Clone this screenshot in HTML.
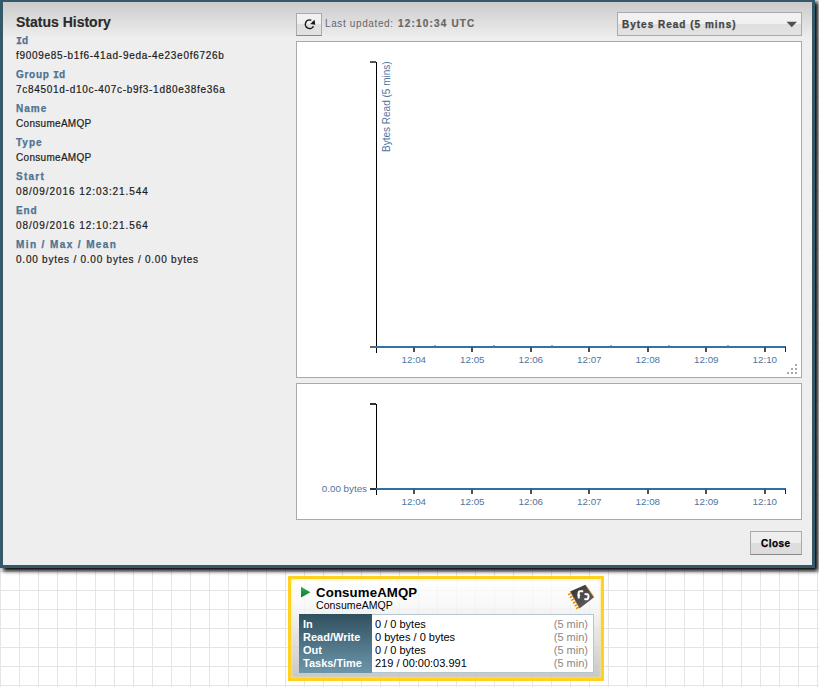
<!DOCTYPE html>
<html><head><meta charset="utf-8">
<style>
*{margin:0;padding:0;box-sizing:border-box}
html,body{width:819px;height:687px;overflow:hidden;background:#fff;font-family:"Liberation Sans",sans-serif}
.abs{position:absolute}
#grid{position:absolute;left:0;top:0}
#dlg{position:absolute;left:0;top:-1px;width:815px;height:569px;background:#355969;box-shadow:3px 3px 4px #000}
#dlgin{position:absolute;left:3px;top:3px;width:809px;height:563px;background:linear-gradient(#cbcbcb 0px,#eeeeee 36px,#eeeeee 100%)}
.t{position:absolute;white-space:nowrap;line-height:1}
.lbl{color:#4f7292;font-weight:bold;font-size:10px;-webkit-text-stroke:0.25px #4f7292}
.val{color:#1c1c1c;font-size:10px;-webkit-text-stroke:0.2px #1c1c1c}
.btn{position:absolute;border:1px solid #aaa;border-bottom-color:#888;background:linear-gradient(#f2f2f2 0,#f0f0f0 50%,#dfdfdf 50%,#e2e2e2 100%)}
.panel{position:absolute;background:#fff;border:1px solid #a9a9a9}
.ax{fill:#50759d;font-size:9.8px;font-family:"Liberation Sans",sans-serif}
</style></head><body>
<svg id="grid" width="819" height="687"><g fill="#e4e4e4" shape-rendering="crispEdges"><rect x="0" y="0" width="1" height="687"/><rect x="19" y="0" width="1" height="687"/><rect x="38" y="0" width="1" height="687"/><rect x="57" y="0" width="1" height="687"/><rect x="76" y="0" width="1" height="687"/><rect x="95" y="0" width="1" height="687"/><rect x="114" y="0" width="1" height="687"/><rect x="133" y="0" width="1" height="687"/><rect x="152" y="0" width="1" height="687"/><rect x="171" y="0" width="1" height="687"/><rect x="190" y="0" width="1" height="687"/><rect x="209" y="0" width="1" height="687"/><rect x="228" y="0" width="1" height="687"/><rect x="247" y="0" width="1" height="687"/><rect x="266" y="0" width="1" height="687"/><rect x="285" y="0" width="1" height="687"/><rect x="304" y="0" width="1" height="687"/><rect x="323" y="0" width="1" height="687"/><rect x="342" y="0" width="1" height="687"/><rect x="361" y="0" width="1" height="687"/><rect x="380" y="0" width="1" height="687"/><rect x="399" y="0" width="1" height="687"/><rect x="418" y="0" width="1" height="687"/><rect x="437" y="0" width="1" height="687"/><rect x="456" y="0" width="1" height="687"/><rect x="475" y="0" width="1" height="687"/><rect x="494" y="0" width="1" height="687"/><rect x="513" y="0" width="1" height="687"/><rect x="532" y="0" width="1" height="687"/><rect x="551" y="0" width="1" height="687"/><rect x="570" y="0" width="1" height="687"/><rect x="589" y="0" width="1" height="687"/><rect x="608" y="0" width="1" height="687"/><rect x="627" y="0" width="1" height="687"/><rect x="646" y="0" width="1" height="687"/><rect x="665" y="0" width="1" height="687"/><rect x="684" y="0" width="1" height="687"/><rect x="703" y="0" width="1" height="687"/><rect x="722" y="0" width="1" height="687"/><rect x="741" y="0" width="1" height="687"/><rect x="760" y="0" width="1" height="687"/><rect x="779" y="0" width="1" height="687"/><rect x="798" y="0" width="1" height="687"/><rect x="817" y="0" width="1" height="687"/><rect x="0" y="1" width="819" height="1"/><rect x="0" y="20" width="819" height="1"/><rect x="0" y="39" width="819" height="1"/><rect x="0" y="58" width="819" height="1"/><rect x="0" y="77" width="819" height="1"/><rect x="0" y="96" width="819" height="1"/><rect x="0" y="115" width="819" height="1"/><rect x="0" y="134" width="819" height="1"/><rect x="0" y="153" width="819" height="1"/><rect x="0" y="172" width="819" height="1"/><rect x="0" y="191" width="819" height="1"/><rect x="0" y="210" width="819" height="1"/><rect x="0" y="229" width="819" height="1"/><rect x="0" y="248" width="819" height="1"/><rect x="0" y="267" width="819" height="1"/><rect x="0" y="286" width="819" height="1"/><rect x="0" y="305" width="819" height="1"/><rect x="0" y="324" width="819" height="1"/><rect x="0" y="343" width="819" height="1"/><rect x="0" y="362" width="819" height="1"/><rect x="0" y="381" width="819" height="1"/><rect x="0" y="400" width="819" height="1"/><rect x="0" y="419" width="819" height="1"/><rect x="0" y="438" width="819" height="1"/><rect x="0" y="457" width="819" height="1"/><rect x="0" y="476" width="819" height="1"/><rect x="0" y="495" width="819" height="1"/><rect x="0" y="514" width="819" height="1"/><rect x="0" y="533" width="819" height="1"/><rect x="0" y="552" width="819" height="1"/><rect x="0" y="571" width="819" height="1"/><rect x="0" y="590" width="819" height="1"/><rect x="0" y="609" width="819" height="1"/><rect x="0" y="628" width="819" height="1"/><rect x="0" y="647" width="819" height="1"/><rect x="0" y="666" width="819" height="1"/><rect x="0" y="685" width="819" height="1"/></g></svg>

<div id="dlg"><div id="dlgin"></div></div>

<!-- left info -->
<div class="t" style="left:16px;top:15px;font-size:14px;font-weight:bold;color:#2a2a2a;-webkit-text-stroke:0.15px #2a2a2a">Status History</div>
<div class="t lbl" style="left:16px;top:36px"><span style="font-family:'Liberation Mono',monospace">I</span>d</div>
<div class="t val" style="left:16px;top:51px;letter-spacing:0.71px">f9009e85-b1f6-41ad-9eda-4e23e0f6726b</div>
<div class="t lbl" style="left:16px;top:70px;letter-spacing:0.7px">Group <span style="font-family:'Liberation Mono',monospace;letter-spacing:0">I</span>d</div>
<div class="t val" style="left:16px;top:85px;letter-spacing:0.71px">7c84501d-d10c-407c-b9f3-1d80e38fe36a</div>
<div class="t lbl" style="left:16px;top:104px;letter-spacing:1px">Name</div>
<div class="t val" style="left:16px;top:119px;letter-spacing:0.3px">ConsumeAMQP</div>
<div class="t lbl" style="left:16px;top:138px;letter-spacing:1px">Type</div>
<div class="t val" style="left:16px;top:153px;letter-spacing:0.3px">ConsumeAMQP</div>
<div class="t lbl" style="left:16px;top:172px;letter-spacing:1.25px">Start</div>
<div class="t val" style="left:16px;top:187px;letter-spacing:0.94px">08/09/2016 12:03:21.544</div>
<div class="t lbl" style="left:16px;top:206px;letter-spacing:0.85px">End</div>
<div class="t val" style="left:16px;top:221px;letter-spacing:0.94px">08/09/2016 12:10:21.564</div>
<div class="t lbl" style="left:16px;top:240px;letter-spacing:1.4px">Min / Max / Mean</div>
<div class="t val" style="left:16px;top:255px;letter-spacing:0.77px">0.00 bytes / 0.00 bytes / 0.00 bytes</div>

<!-- toolbar -->
<div class="btn" style="left:296px;top:13px;width:26px;height:23px"></div>
<svg class="abs" style="left:296px;top:13px" width="26" height="23">
 <path d="M17.5 13.2 A4.3 4.3 0 1 1 15.3 7.3" fill="none" stroke="#151515" stroke-width="1.45"/>
 <path d="M14.3 11.1 L19.3 11.7 L18.5 6.8 Z" fill="#151515"/>
</svg>
<div class="t" style="left:325px;top:19px;font-size:10px;color:#666;letter-spacing:0.62px">Last updated:</div>
<div class="t" style="left:398px;top:19px;font-size:10px;color:#666;font-weight:bold;letter-spacing:1.18px;-webkit-text-stroke:0.2px #666">12:10:34 UTC</div>

<div class="btn" style="left:617px;top:12px;width:185px;height:24px;border-color:#aaa"></div>
<div class="t" style="left:622px;top:20px;font-size:10px;font-weight:bold;color:#444;letter-spacing:1px;-webkit-text-stroke:0.25px #444">Bytes Read (5 mins)</div>
<svg class="abs" style="left:786px;top:20px" width="12" height="9"><path d="M0.5 1.8 L11 1.8 L5.75 7.2 Z" fill="#505050"/></svg>

<!-- panel 1 -->
<div class="panel" style="left:296px;top:41px;width:506px;height:337px"></div>
<div class="panel" style="left:296px;top:383px;width:506px;height:137px"></div>
<svg class="abs" style="left:0;top:0" width="819" height="687">
 <g shape-rendering="crispEdges">
  <rect x="376" y="62" width="1" height="291" fill="#000"/>
  <rect x="370" y="61" width="6" height="2" fill="#555"/>
  <rect x="370" y="346" width="6" height="2" fill="#666"/>
  <rect x="376" y="347" width="410" height="1" fill="#666"/>
  <rect x="376" y="346" width="410" height="1" fill="#3373ab"/>
  <rect x="413" y="347" width="2" height="5" fill="#505050"/><rect x="471" y="347" width="2" height="5" fill="#505050"/><rect x="530" y="347" width="2" height="5" fill="#505050"/><rect x="588" y="347" width="2" height="5" fill="#505050"/><rect x="647" y="347" width="2" height="5" fill="#505050"/><rect x="705" y="347" width="2" height="5" fill="#505050"/><rect x="764" y="347" width="2" height="5" fill="#505050"/><rect x="785" y="347" width="1" height="5" fill="#222"/>
  <rect x="434" y="345" width="2" height="1" fill="#8fb3d6"/><rect x="493" y="345" width="2" height="1" fill="#8fb3d6"/><rect x="551" y="345" width="2" height="1" fill="#8fb3d6"/><rect x="610" y="345" width="2" height="1" fill="#8fb3d6"/><rect x="668" y="345" width="2" height="1" fill="#8fb3d6"/><rect x="727" y="345" width="2" height="1" fill="#8fb3d6"/>
  <rect x="795" y="364" width="2" height="2" fill="#aaa"/>
  <rect x="791" y="368" width="2" height="2" fill="#aaa"/>
  <rect x="795" y="368" width="2" height="2" fill="#aaa"/>
  <rect x="787" y="372" width="2" height="2" fill="#aaa"/>
  <rect x="791" y="372" width="2" height="2" fill="#aaa"/>
  <rect x="795" y="372" width="2" height="2" fill="#aaa"/>

  <rect x="376" y="404" width="1" height="91" fill="#000"/>
  <rect x="370" y="403" width="6" height="2" fill="#333"/>
  <rect x="370" y="488" width="6" height="2" fill="#333"/>
  <rect x="376" y="488" width="410" height="2" fill="#2f6fa3"/>
  <rect x="413" y="489" width="2" height="5" fill="#505050"/><rect x="471" y="489" width="2" height="5" fill="#505050"/><rect x="530" y="489" width="2" height="5" fill="#505050"/><rect x="588" y="489" width="2" height="5" fill="#505050"/><rect x="647" y="489" width="2" height="5" fill="#505050"/><rect x="705" y="489" width="2" height="5" fill="#505050"/><rect x="764" y="489" width="2" height="5" fill="#505050"/><rect x="785" y="489" width="1" height="5" fill="#222"/>
 </g>
 <g class="ax">
  <text transform="translate(390,152) rotate(-90)" style="font-size:10px">Bytes Read (5 mins)</text>
  <text x="413.8" y="363" text-anchor="middle">12:04</text><text x="472.3" y="363" text-anchor="middle">12:05</text><text x="530.8" y="363" text-anchor="middle">12:06</text><text x="589.3" y="363" text-anchor="middle">12:07</text><text x="647.8" y="363" text-anchor="middle">12:08</text><text x="706.3" y="363" text-anchor="middle">12:09</text><text x="764.8" y="363" text-anchor="middle">12:10</text>
  <text x="413.8" y="505" text-anchor="middle">12:04</text><text x="472.3" y="505" text-anchor="middle">12:05</text><text x="530.8" y="505" text-anchor="middle">12:06</text><text x="589.3" y="505" text-anchor="middle">12:07</text><text x="647.8" y="505" text-anchor="middle">12:08</text><text x="706.3" y="505" text-anchor="middle">12:09</text><text x="764.8" y="505" text-anchor="middle">12:10</text>
  <text x="367" y="491.5" text-anchor="end">0.00 bytes</text>
 </g>
</svg>

<!-- close -->
<div class="btn" style="left:750px;top:531px;width:52px;height:24px;background:linear-gradient(#eeeeee 0,#eeeeee 50%,#dddddd 50%,#dddddd 100%)"></div>
<div class="t" style="left:761px;top:539px;font-size:10px;font-weight:bold;color:#000;letter-spacing:0.45px;-webkit-text-stroke:0.25px #000">Close</div>

<!-- processor -->
<div class="abs" style="left:288px;top:576px;width:316px;height:105px;border:3px solid #ffd21f;background:linear-gradient(rgba(255,255,255,0.82) 0%,rgba(248,248,248,0.8) 25%,rgba(190,190,190,0.85) 100%);box-shadow:inset 0 0 2px 1px rgba(255,230,140,0.7)"></div>
<svg class="abs" style="left:300px;top:586px" width="12" height="13"><defs><linearGradient id="pg" x1="0" y1="0" x2="0" y2="1"><stop offset="0" stop-color="#2bb24f"/><stop offset="1" stop-color="#0d7a33"/></linearGradient></defs><path d="M1 0.7 L10.4 6.2 L1 11.5 Z" fill="url(#pg)"/></svg>
<div class="t" style="left:316px;top:586px;font-size:13.2px;font-weight:bold;color:#000;letter-spacing:0.15px">ConsumeAMQP</div>
<div class="t" style="left:316px;top:600px;font-size:10.5px;color:#000;letter-spacing:0.1px">ConsumeAMQP</div>
<svg class="abs" style="left:564px;top:582px" width="34" height="30">
 <defs><linearGradient id="cg" x1="0" y1="0" x2="1" y2="1"><stop offset="0" stop-color="#2e2e2e"/><stop offset="1" stop-color="#6a6a6a"/></linearGradient></defs>
 <polygon points="21.4,2.8 30.1,15.3 15.5,26.6 6.1,9.4" fill="url(#cg)"/>
 <line x1="22.2" y1="3.6" x2="29.6" y2="14.4" stroke="#f0a52a" stroke-width="0.9"/>
 <g stroke="#e8900c" stroke-width="1.5" stroke-linecap="round">
  <line x1="6.8" y1="11.2" x2="4.6" y2="12.6"/>
  <line x1="8.4" y1="14" x2="6.2" y2="15.4"/>
  <line x1="10" y1="16.8" x2="7.8" y2="18.2"/>
  <line x1="11.6" y1="19.6" x2="9.4" y2="21"/>
  <line x1="13.2" y1="22.4" x2="11" y2="23.8"/>
  <line x1="14.8" y1="25" x2="12.6" y2="26.4"/>
 </g>
 <path d="M19.2 9.2 L15.8 9.2 Q14.6 9.4 14.6 11 L14.8 16.4" fill="none" stroke="#fff" stroke-width="2.1"/>
 <path d="M13.4 13.2 L16.2 13.4" stroke="#fff" stroke-width="1.2"/>
 <path d="M20.6 12 L23.4 12.3 Q24.6 12.6 24.5 14.5 L24 16.6 Q23.5 17.6 21.8 17.3 L20.4 17" fill="none" stroke="#fff" stroke-width="2"/>
</svg>
<div class="abs" style="left:299px;top:614px;width:73px;height:59px;background:linear-gradient(#30505e,#6d96ab)"></div>
<div class="abs" style="left:372px;top:614px;width:222px;height:59px;background:#fff;border:1px solid #b4c6d0;border-left:none"></div>
<div class="abs" style="left:303px;top:618px;font-size:11px;font-weight:bold;color:#fff;line-height:13px;white-space:nowrap">In<br>Read/Write<br>Out<br>Tasks/Time</div>
<div class="abs" style="left:375px;top:618px;font-size:11px;color:#000;line-height:13px;white-space:nowrap">0 / 0 bytes<br>0 bytes / 0 bytes<br>0 / 0 bytes<br>219 / 00:00:03.991</div>
<div class="abs" style="left:500px;width:88px;text-align:right;top:618px;font-size:11px;color:#888;line-height:13px;white-space:nowrap">(5 min)<br>(5 min)<br>(5 min)<br>(5 min)</div>
</body></html>
